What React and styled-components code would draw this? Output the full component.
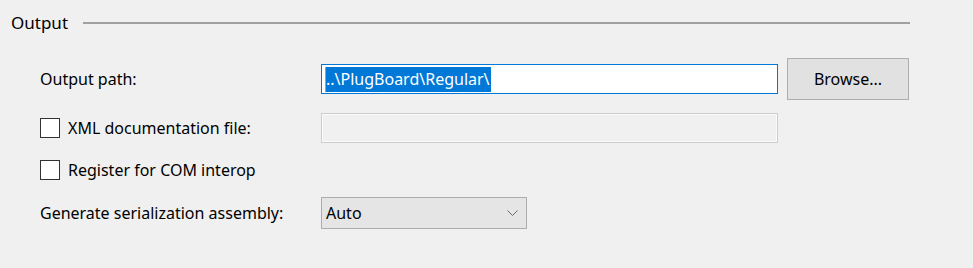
import React from 'react';
import styled, { createGlobalStyle } from 'styled-components';

const GlobalStyle = createGlobalStyle`
  html, body {
    margin: 0;
    padding: 0;
    background: #f0f0f0;
  }
  body {
    font-family: 'Segoe UI', 'Noto Sans', 'Open Sans', sans-serif;
    font-size: 16px;
    color: #000;
  }
`;

const Page = styled.div`
  box-sizing: border-box;
  height: 268px;
  padding: 12px 63px 0 11px;
`;

const Header = styled.div`
  display: flex;
  align-items: center;
  gap: 15px;
  height: 22px;
`;

const Title = styled.span`
  font-size: 17px;
  line-height: 22px;
`;

const Rule = styled.div`
  flex: 1;
  height: 2px;
  background: #a0a0a0;
`;

const Form = styled.div`
  display: flex;
  flex-direction: column;
  margin-top: 24px;
  padding-left: 29px;
`;

const Row = styled.div`
  display: flex;
  align-items: center;
  height: 42px;
  margin-top: ${p => p.$gap || 0}px;
`;

const Label = styled.span`
  width: 281px;
  flex-shrink: 0;
`;

const CheckLabel = styled.label`
  display: flex;
  align-items: center;
  gap: 8px;
  width: 281px;
  flex-shrink: 0;
`;

const Box = styled.span`
  box-sizing: border-box;
  width: 20px;
  height: 20px;
  border: 1px solid #333;
  background: #fff;
`;

const TextBox = styled.div`
  box-sizing: border-box;
  display: flex;
  align-items: center;
  width: 457px;
  height: 30px;
  padding-left: 3px;
  background: ${p => (p.$disabled ? '#f0f0f0' : '#fff')};
  border: 1px solid ${p => (p.$disabled ? '#cccccc' : '#0078d7')};
  box-shadow: ${p => (p.$disabled ? 'inset 0 0 0 1px #fbfbfb' : 'none')};
`;

const Selected = styled.span`
  display: flex;
  align-items: center;
  height: 25px;
  padding-right: 1px;
  background: #0078d7;
  color: #fff;
  border-left: 1px solid #ff8728;
`;

const Button = styled.div`
  box-sizing: border-box;
  display: flex;
  align-items: center;
  justify-content: center;
  width: 122px;
  height: 42px;
  margin-left: 9px;
  background: #e1e1e1;
  border: 1px solid #adadad;
`;

const Select = styled.div`
  box-sizing: border-box;
  display: flex;
  align-items: center;
  justify-content: space-between;
  width: 206px;
  height: 32px;
  padding: 0 8px 0 4px;
  background: #e5e5e5;
  border: 1px solid #acacac;
`;

const Chevron = () => (
  <svg width="11" height="6" viewBox="0 0 11 6">
    <path d="M0.5 0.5 L5.5 5.5 L10.5 0.5" fill="none" stroke="#6a6a6a" strokeWidth="1" />
  </svg>
);

export default function App() {
  return (
    <>
      <GlobalStyle />
      <Page>
        <Header>
          <Title>Output</Title>
          <Rule />
        </Header>
        <Form>
          <Row>
            <Label>Output path:</Label>
            <TextBox>
              <Selected>..\PlugBoard\Regular\</Selected>
            </TextBox>
            <Button>Browse...</Button>
          </Row>
          <Row $gap={7}>
            <CheckLabel>
              <Box />
              XML documentation file:
            </CheckLabel>
            <TextBox $disabled />
          </Row>
          <Row>
            <CheckLabel>
              <Box />
              Register for COM interop
            </CheckLabel>
          </Row>
          <Row $gap={1}>
            <Label>Generate serialization assembly:</Label>
            <Select>
              <span>Auto</span>
              <Chevron />
            </Select>
          </Row>
        </Form>
      </Page>
    </>
  );
}
